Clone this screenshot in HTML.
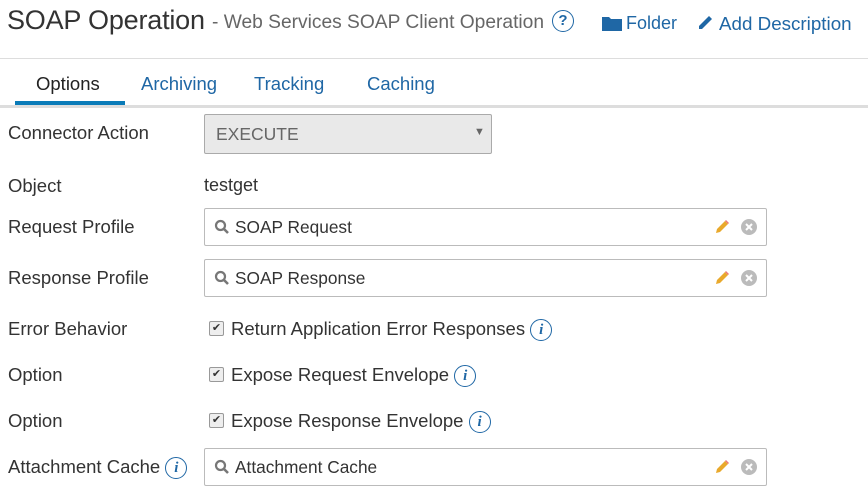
<!DOCTYPE html>
<html><head><meta charset="utf-8"><style>
body{margin:0;width:868px;height:497px;background:#fff;font-family:"Liberation Sans",sans-serif;color:#333;position:relative;overflow:hidden}
.a{position:absolute;white-space:nowrap}
.lbl{font-size:18.5px;color:#333;left:8px}
.box{position:absolute;left:204px;width:561px;height:36px;border:1px solid #bbb;border-radius:2px;background:#fff}
.box .t{position:absolute;left:30px;top:8px;font-size:17.3px;color:#333}
.info{display:inline-block;width:20px;height:20px;border:1.5px solid #1f67a5;border-radius:50%;color:#1f67a5;font:italic bold 15px "Liberation Serif",serif;text-align:center;line-height:20px;vertical-align:middle}
.cb{position:absolute;left:209px;width:13px;height:13px;border:1px solid #999;border-radius:2px;background:#eee;font-size:11px;line-height:13px;text-align:center;color:#333}
.ct{position:absolute;left:231px;font-size:18.5px;color:#333}
</style></head><body>
<div class="a" style="left:7px;top:5px;font-size:27px;color:#333;letter-spacing:-0.2px">SOAP Operation</div>
<div class="a" style="left:212px;top:12px;font-size:19.2px;color:#666">- Web Services SOAP Client Operation</div>
<div class="a info" style="left:552px;top:10px;width:20px;height:20px;font:bold 15px 'Liberation Sans',sans-serif;line-height:20px;font-style:normal">?</div>
<svg class="a" style="left:602px;top:16px" width="20" height="15" viewBox="0 0 20 15"><path d="M0 1h7l2 2h11v12H0z" fill="#1f67a5"/></svg>
<div class="a" style="left:626px;top:13px;font-size:18px;color:#1f67a5">Folder</div>
<svg class="a" style="left:697px;top:14px" width="17" height="17" viewBox="0 0 17 17"><path d="M2 12L12 2l3 3L5 15H2z" fill="#1f67a5"/></svg>
<div class="a" style="left:719px;top:13px;font-size:18.8px;color:#1f67a5">Add Description</div>
<div class="a" style="left:0;top:58px;width:868px;height:1px;background:#ddd"></div>
<div class="a" style="left:36px;top:73px;font-size:18.5px;color:#222">Options</div>
<div class="a" style="left:141px;top:73px;font-size:18.5px;color:#1f67a5">Archiving</div>
<div class="a" style="left:254px;top:73px;font-size:18.5px;color:#1f67a5">Tracking</div>
<div class="a" style="left:367px;top:73px;font-size:18.5px;color:#1f67a5">Caching</div>
<div class="a" style="left:0;top:105px;width:868px;height:3px;background:#ddd"></div>
<div class="a" style="left:15px;top:101px;width:110px;height:4px;background:#0a7bb8"></div>
<div class="a lbl" style="top:122px">Connector Action</div>
<div class="a" style="left:204px;top:114px;width:286px;height:38px;border:1px solid #aaa;border-radius:2px;background:#e9e9e9"></div>
<div class="a" style="left:216px;top:124px;font-size:17.5px;color:#666">EXECUTE</div>
<div class="a" style="left:474px;top:126px;font-size:11px;color:#666">▼</div>
<div class="a lbl" style="top:175px">Object</div>
<div class="a" style="left:204px;top:175px;font-size:18px">testget</div>
<div class="a lbl" style="top:216px">Request Profile</div>
<div class="box" style="top:208px"><svg class="a" style="left:9px;top:10px" width="16" height="16" viewBox="0 0 16 16"><circle cx="6.5" cy="6.5" r="4.5" stroke="#777" stroke-width="2.2" fill="none"/><path d="M10 10l4 4" stroke="#777" stroke-width="2.6"/></svg><span class="t">SOAP Request</span>
<svg class="a" style="left:509px;top:10px" width="16" height="16" viewBox="0 0 16 16"><path d="M2 14l1-4 8-8 3 3-8 8z" fill="#e9a92c"/><path d="M11 2l3 3 1-1-3-3z" fill="#e77"/></svg><svg class="a" style="left:535px;top:9px" width="18" height="18" viewBox="0 0 18 18"><circle cx="9" cy="9" r="8" fill="#bbb"/><path d="M6 6l6 6M12 6l-6 6" stroke="#fff" stroke-width="2"/></svg></div>
<div class="a lbl" style="top:267px">Response Profile</div>
<div class="box" style="top:259px"><svg class="a" style="left:9px;top:10px" width="16" height="16" viewBox="0 0 16 16"><circle cx="6.5" cy="6.5" r="4.5" stroke="#777" stroke-width="2.2" fill="none"/><path d="M10 10l4 4" stroke="#777" stroke-width="2.6"/></svg><span class="t">SOAP Response</span>
<svg class="a" style="left:509px;top:10px" width="16" height="16" viewBox="0 0 16 16"><path d="M2 14l1-4 8-8 3 3-8 8z" fill="#e9a92c"/><path d="M11 2l3 3 1-1-3-3z" fill="#e77"/></svg><svg class="a" style="left:535px;top:9px" width="18" height="18" viewBox="0 0 18 18"><circle cx="9" cy="9" r="8" fill="#bbb"/><path d="M6 6l6 6M12 6l-6 6" stroke="#fff" stroke-width="2"/></svg></div>
<div class="a lbl" style="top:318px">Error Behavior</div>
<div class="cb" style="top:321px">✔</div><div class="ct" style="top:318px">Return Application Error Responses <span class="info">i</span></div>
<div class="a lbl" style="top:364px">Option</div>
<div class="cb" style="top:367px">✔</div><div class="ct" style="top:364px">Expose Request Envelope <span class="info">i</span></div>
<div class="a lbl" style="top:410px">Option</div>
<div class="cb" style="top:413px">✔</div><div class="ct" style="top:410px">Expose Response Envelope <span class="info">i</span></div>
<div class="a lbl" style="top:456px">Attachment Cache <span class="info">i</span></div>
<div class="box" style="top:448px"><svg class="a" style="left:9px;top:10px" width="16" height="16" viewBox="0 0 16 16"><circle cx="6.5" cy="6.5" r="4.5" stroke="#777" stroke-width="2.2" fill="none"/><path d="M10 10l4 4" stroke="#777" stroke-width="2.6"/></svg><span class="t">Attachment Cache</span>
<svg class="a" style="left:509px;top:10px" width="16" height="16" viewBox="0 0 16 16"><path d="M2 14l1-4 8-8 3 3-8 8z" fill="#e9a92c"/><path d="M11 2l3 3 1-1-3-3z" fill="#e77"/></svg><svg class="a" style="left:535px;top:9px" width="18" height="18" viewBox="0 0 18 18"><circle cx="9" cy="9" r="8" fill="#bbb"/><path d="M6 6l6 6M12 6l-6 6" stroke="#fff" stroke-width="2"/></svg></div>
</body></html>
